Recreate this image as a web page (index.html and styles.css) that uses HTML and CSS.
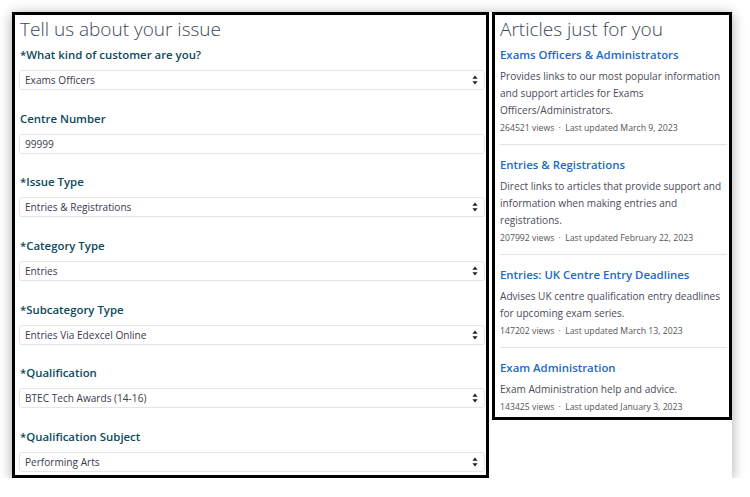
FILE: index.html
```html
<!DOCTYPE html>
<html lang="en">
<head>
    <meta charset="UTF-8">
    <meta name="viewport" content="width=device-width, initial-scale=1.0">
    <title>Contact us</title>
    <link rel="stylesheet" href="styles.css">
</head>
<body>
    <div class="panel">
        <div class="issue-box">
            <h1 class="box-title">Tell us about your issue</h1>

            <div class="field">
                <label class="field-label">*What kind of customer are you?</label>
                <div class="select">
                    <span>Exams Officers</span>
                    <svg class="arrows" width="6" height="10" viewBox="0 0 6 10"><path d="M3 0.5 L5.6 3.8 H0.4 Z M3 9.5 L5.6 6.2 H0.4 Z" fill="#222"/></svg>
                </div>
            </div>

            <div class="field">
                <label class="field-label">Centre Number</label>
                <div class="select input">
                    <span>99999</span>
                </div>
            </div>

            <div class="field">
                <label class="field-label">*Issue Type</label>
                <div class="select">
                    <span>Entries &amp; Registrations</span>
                    <svg class="arrows" width="6" height="10" viewBox="0 0 6 10"><path d="M3 0.5 L5.6 3.8 H0.4 Z M3 9.5 L5.6 6.2 H0.4 Z" fill="#222"/></svg>
                </div>
            </div>

            <div class="field">
                <label class="field-label">*Category Type</label>
                <div class="select">
                    <span>Entries</span>
                    <svg class="arrows" width="6" height="10" viewBox="0 0 6 10"><path d="M3 0.5 L5.6 3.8 H0.4 Z M3 9.5 L5.6 6.2 H0.4 Z" fill="#222"/></svg>
                </div>
            </div>

            <div class="field">
                <label class="field-label">*Subcategory Type</label>
                <div class="select">
                    <span>Entries Via Edexcel Online</span>
                    <svg class="arrows" width="6" height="10" viewBox="0 0 6 10"><path d="M3 0.5 L5.6 3.8 H0.4 Z M3 9.5 L5.6 6.2 H0.4 Z" fill="#222"/></svg>
                </div>
            </div>

            <div class="field">
                <label class="field-label">*Qualification</label>
                <div class="select">
                    <span>BTEC Tech Awards (14-16)</span>
                    <svg class="arrows" width="6" height="10" viewBox="0 0 6 10"><path d="M3 0.5 L5.6 3.8 H0.4 Z M3 9.5 L5.6 6.2 H0.4 Z" fill="#222"/></svg>
                </div>
            </div>

            <div class="field last">
                <label class="field-label">*Qualification Subject</label>
                <div class="select">
                    <span>Performing Arts</span>
                    <svg class="arrows" width="6" height="10" viewBox="0 0 6 10"><path d="M3 0.5 L5.6 3.8 H0.4 Z M3 9.5 L5.6 6.2 H0.4 Z" fill="#222"/></svg>
                </div>
            </div>
        </div>

        <div class="articles-box">
            <h2 class="box-title">Articles just for you</h2>

            <div class="article">
                <a class="article-title" href="#">Exams Officers &amp; Administrators</a>
                <p class="article-desc">Provides links to our most popular information and support articles for Exams Officers/Administrators.</p>
                <div class="article-meta">264521 views <span class="dot">·</span> Last updated March 9, 2023</div>
            </div>

            <div class="article">
                <a class="article-title" href="#">Entries &amp; Registrations</a>
                <p class="article-desc">Direct links to articles that provide support and information when making entries and registrations.</p>
                <div class="article-meta">207992 views <span class="dot">·</span> Last updated February 22, 2023</div>
            </div>

            <div class="article">
                <a class="article-title" href="#">Entries: UK Centre Entry Deadlines</a>
                <p class="article-desc">Advises UK centre qualification entry deadlines for upcoming exam series.</p>
                <div class="article-meta">147202 views <span class="dot">·</span> Last updated March 13, 2023</div>
            </div>

            <div class="article last">
                <a class="article-title" href="#">Exam Administration</a>
                <p class="article-desc">Exam Administration help and advice.</p>
                <div class="article-meta">143425 views <span class="dot">·</span> Last updated January 3, 2023</div>
            </div>
        </div>
    </div>
</body>
</html>
```

FILE: styles.css
```css
body {
    margin: 0;
    background-color: #fff;
    font-family: "Open Sans", "Liberation Sans", sans-serif;
    color: #333;
}
.panel {
    display: flex;
    align-items: flex-start;
    gap: 3px;
    margin: 12px 0 0 12px;
    width: 720px;
    height: 466px;
    background-color: #fff;
    box-shadow: 0 2px 12px rgba(0, 0, 0, 0.35);
}
.issue-box {
    box-sizing: border-box;
    width: 477px;
    height: 466px;
    border: 3px solid #000;
    padding: 0 1px 0 4px;
}
.articles-box {
    box-sizing: border-box;
    width: 240px;
    border: 3px solid #000;
    padding: 0 2px 2px 5px;
}
.box-title {
    margin: 0 0 3px 0;
    font-size: 19px;
    line-height: 28px;
    font-weight: 300;
    color: #3b4858;
}
.issue-box .box-title {
    padding-left: 1px;
}
.field {
    margin-bottom: 19.7px;
}
.field.last {
    margin-bottom: 0;
}
.field-label {
    display: block;
    padding-left: 1px;
    margin-bottom: 6px;
    font-size: 11.4px;
    line-height: 18px;
    font-weight: 600;
    color: #0d4a5a;
}
.select {
    display: flex;
    justify-content: space-between;
    align-items: center;
    box-sizing: border-box;
    height: 20px;
    padding: 0 6px 0 5px;
    border: 1px solid #e4e4ee;
    border-radius: 3px;
    font-size: 10.1px;
    color: #3a3a4e;
}
.article {
    padding-bottom: 8px;
    border-bottom: 1px solid #e2e2e2;
    margin-bottom: 11px;
}
.article.last {
    padding-bottom: 0;
    border-bottom: none;
    margin-bottom: 0;
}
.article-title {
    display: block;
    margin-bottom: 4px;
    font-size: 11.4px;
    line-height: 18px;
    font-weight: 600;
    color: #1b6ac6;
    text-decoration: none;
}
.article-desc {
    margin: 0 0 1px 0;
    font-size: 10.1px;
    line-height: 17px;
    color: #4b4b5b;
}
.article-meta {
    font-size: 8.7px;
    line-height: 16px;
    color: #555;
}
.dot {
    padding: 0 2px;
}
```
